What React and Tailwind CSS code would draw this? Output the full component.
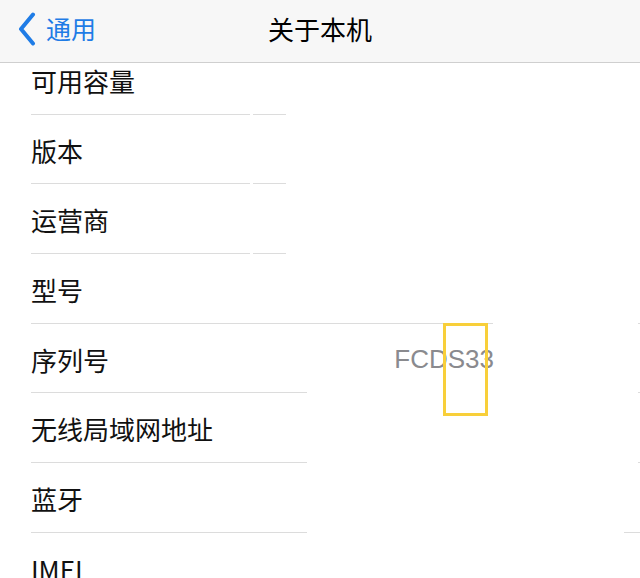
const rows = [
  { label: '可用容量', segs: [[31, 250], [253, 286]] },
  { label: '版本', segs: [[31, 250], [253, 286]] },
  { label: '运营商', segs: [[31, 250], [253, 286]] },
  { label: '型号', segs: [[31, 493], [638, 640]] },
  { label: '序列号', value: 'FCDS33', segs: [[31, 307], [638, 640]] },
  { label: '无线局域网地址', segs: [[31, 307], [638, 640]] },
  { label: '蓝牙', segs: [[31, 307], [624, 640]] },
  { label: 'IMEI', segs: [] },
];

function Separator({ segs }) {
  let cursor = 0;
  return (
    <div className="flex h-px">
      {segs.map(([a, b], i) => {
        const gap = a - cursor;
        cursor = b;
        return (
          <div
            key={i}
            className="h-px bg-[#dcdcdc]"
            style={{ marginLeft: gap, width: b - a }}
          />
        );
      })}
    </div>
  );
}

function Row({ label, value, segs }) {
  return (
    <div className="relative">
      <div className="flex h-[68.7px] items-center pl-[31px] pt-[2px]">
        <span className="text-[26px] text-[#111]">{label}</span>
        {value && (
          <span className="ml-auto mr-[146px] font-['Liberation_Sans',sans-serif] text-[26px] text-[#8a8a8e]">
            {value}
          </span>
        )}
      </div>
      <Separator segs={segs} />
      {value && (
        <div className="absolute left-[443px] top-[-1px] h-[93px] w-[45px] border-[3px] border-[#f8cf3a]" />
      )}
    </div>
  );
}

export default function App() {
  return (
    <div className="relative h-[578px] w-[640px] overflow-hidden bg-white font-['Noto_Sans_CJK_SC',sans-serif]">
      <div className="relative z-10 flex h-[63px] items-center border-b border-[#cfcfcf] bg-[#f7f7f7] pb-[5px]">
        <div className="flex items-center pl-[18px] text-[#1f7ce6]">
          <svg width="18" height="34" viewBox="0 0 18 34" fill="none">
            <path d="M15 2.5 L3 17 L15 31.5" stroke="#1f7ce6" strokeWidth="4" strokeLinecap="round" strokeLinejoin="round" />
          </svg>
          <span className="ml-[10px] text-[25px]">通用</span>
        </div>
        <div className="absolute left-0 right-0 text-center text-[26px] font-normal text-black">
          关于本机
        </div>
      </div>
      <div className="-mt-[18px]">
        {rows.map((r) => (
          <Row key={r.label} {...r} />
        ))}
      </div>
    </div>
  );
}
